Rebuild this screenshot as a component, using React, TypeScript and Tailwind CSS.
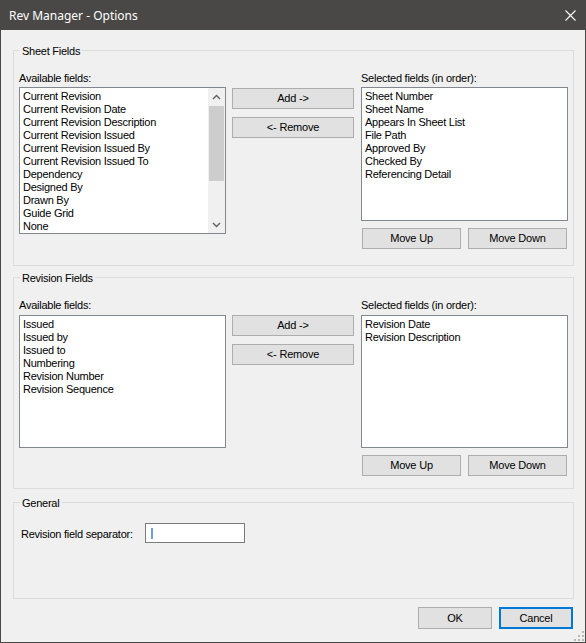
import React from "react";

const FONT = { fontFamily: '"Liberation Sans", Arial, sans-serif' };

function Btn({ children, w, primary }: { children: React.ReactNode; w: string; primary?: boolean }) {
  return (
    <div
      className={
        "h-[21px] flex items-center justify-center bg-[#e1e1e1] text-[11px] tracking-[-0.2px] text-black leading-[13px] " +
        w +
        (primary ? " border-2 border-[#0078d7]" : " border border-[#adadad]")
      }
    >
      {children}
    </div>
  );
}

function ListBox({ items, h, scroll }: { items: string[]; h: string; scroll?: boolean }) {
  return (
    <div className={"w-[207px] border border-[#828790] bg-white flex overflow-hidden " + h}>
      <div className="flex-1 pt-[2px] pl-[3px] overflow-hidden">
        {items.map((it) => (
          <div key={it} className="h-[13px] leading-[13px] text-[11px] tracking-[-0.25px] text-black whitespace-nowrap">
            {it}
          </div>
        ))}
      </div>
      {scroll && (
        <div className="w-[17px] flex flex-col bg-[#f0f0f0]">
          <div className="h-[17px] flex items-center justify-center">
            <svg width="9" height="6" viewBox="0 0 9 6">
              <path d="M1 5 L4.5 1.5 L8 5" fill="none" stroke="#606060" strokeWidth="1.4" />
            </svg>
          </div>
          <div className="flex-1 px-[1px]">
            <div className="h-[75px] mt-[1px] bg-[#cdcdcd]" />
          </div>
          <div className="h-[17px] flex items-center justify-center">
            <svg width="9" height="6" viewBox="0 0 9 6">
              <path d="M1 1 L4.5 4.5 L8 1" fill="none" stroke="#606060" strokeWidth="1.4" />
            </svg>
          </div>
        </div>
      )}
    </div>
  );
}

function Legend({ text }: { text: string }) {
  return (
    <div className="-mt-[7px] ml-[6px] px-[2px] w-fit bg-[#f0f0f0] h-[13px] leading-[14px] text-[11px] tracking-[-0.25px] text-black">
      {text}
    </div>
  );
}

function Label({ text, mb }: { text: string; mb: string }) {
  return <div className={"h-[13px] leading-[15px] text-[11px] tracking-[-0.25px] text-black whitespace-nowrap " + mb}>{text}</div>;
}

export default function App() {
  const sheetAvail = [
    "Current Revision",
    "Current Revision Date",
    "Current Revision Description",
    "Current Revision Issued",
    "Current Revision Issued By",
    "Current Revision Issued To",
    "Dependency",
    "Designed By",
    "Drawn By",
    "Guide Grid",
    "None",
  ];
  const sheetSel = [
    "Sheet Number",
    "Sheet Name",
    "Appears In Sheet List",
    "File Path",
    "Approved By",
    "Checked By",
    "Referencing Detail",
  ];
  const revAvail = ["Issued", "Issued by", "Issued to", "Numbering", "Revision Number", "Revision Sequence"];
  const revSel = ["Revision Date", "Revision Description"];

  return (
    <div style={FONT} className="relative w-[586px] h-[643px] border border-[#4a4846] bg-[#f0f0f0] flex flex-col">
      {/* Title bar */}
      <div className="h-[29px] bg-[#4a4846] flex items-center justify-between pl-[8px] pr-[9px]">
        <span
          style={{ fontFamily: '"Noto Sans", "Open Sans", sans-serif' }}
          className="text-white text-[12px] leading-[16px]"
        >
          Rev Manager - Options
        </span>
        <svg width="11" height="11" viewBox="0 0 11 11">
          <path d="M0.5 0.5 L10.5 10.5 M10.5 0.5 L0.5 10.5" stroke="#ffffff" strokeWidth="1.1" />
        </svg>
      </div>

      {/* Body */}
      <div className="flex flex-col pl-[12px] pr-[11px]">
        {/* Sheet Fields */}
        <div className="mt-[20px] border border-[#dcdcdc]">
          <Legend text="Sheet Fields" />
          <div className="mt-[14px] pl-[5px] pr-[5px] pb-[16px] flex items-start">
            <div className="flex flex-col">
              <Label text="Available fields:" mb="mb-[3px]" />
              <ListBox items={sheetAvail} h="h-[147px]" scroll />
            </div>
            <div className="ml-[6px] mt-[17px] flex flex-col gap-[8px]">
              <Btn w="w-[122px]">Add -&gt;</Btn>
              <Btn w="w-[122px]">&lt;- Remove</Btn>
            </div>
            <div className="ml-[7px] flex flex-col">
              <Label text="Selected fields (in order):" mb="mb-[3px]" />
              <ListBox items={sheetSel} h="h-[134px]" />
              <div className="mt-[7px] pl-[1px] flex gap-[7px]">
                <Btn w="w-[99px]">Move Up</Btn>
                <Btn w="w-[99px]">Move Down</Btn>
              </div>
            </div>
          </div>
        </div>

        {/* Revision Fields */}
        <div className="mt-[11px] border border-[#dcdcdc]">
          <Legend text="Revision Fields" />
          <div className="mt-[14px] pl-[5px] pr-[5px] pb-[12px] flex items-start">
            <div className="flex flex-col">
              <Label text="Available fields:" mb="mb-[4px]" />
              <ListBox items={revAvail} h="h-[133px]" />
            </div>
            <div className="ml-[6px] mt-[17px] flex flex-col gap-[8px]">
              <Btn w="w-[122px]">Add -&gt;</Btn>
              <Btn w="w-[122px]">&lt;- Remove</Btn>
            </div>
            <div className="ml-[7px] flex flex-col">
              <Label text="Selected fields (in order):" mb="mb-[4px]" />
              <ListBox items={revSel} h="h-[133px]" />
              <div className="mt-[7px] pl-[1px] flex gap-[7px]">
                <Btn w="w-[99px]">Move Up</Btn>
                <Btn w="w-[99px]">Move Down</Btn>
              </div>
            </div>
          </div>
        </div>

        {/* General */}
        <div className="mt-[13px] h-[97px] border border-[#dcdcdc]">
          <Legend text="General" />
          <div className="mt-[14px] pl-[7px] flex items-center">
            <div className="w-[124px] h-[13px] leading-[15px] text-[11px] tracking-[-0.25px] text-black whitespace-nowrap">
              Revision field separator:
            </div>
            <div className="w-[100px] h-[20px] border border-[#7a7a7a] bg-white flex items-center pl-[5px]">
              <div className="w-[2px] h-[11px] bg-[#6e9fd6]" />
            </div>
          </div>
        </div>
      </div>

      {/* Footer */}
      <div className="mt-[8px] pr-[12px] flex justify-end gap-[7px]">
        <Btn w="w-[74px] h-[22px]">OK</Btn>
        <Btn w="w-[74px] h-[22px]" primary>
          Cancel
        </Btn>
      </div>

      {/* Resize grip */}
      <svg className="absolute right-[1px] bottom-[1px]" width="10" height="10" viewBox="0 0 10 10">
        <rect x="8" y="0" width="2" height="2" fill="#b8b8b8" />
        <rect x="8" y="4" width="2" height="2" fill="#b8b8b8" />
        <rect x="4" y="4" width="2" height="2" fill="#b8b8b8" />
        <rect x="8" y="8" width="2" height="2" fill="#b8b8b8" />
        <rect x="4" y="8" width="2" height="2" fill="#b8b8b8" />
        <rect x="0" y="8" width="2" height="2" fill="#b8b8b8" />
      </svg>
    </div>
  );
}
